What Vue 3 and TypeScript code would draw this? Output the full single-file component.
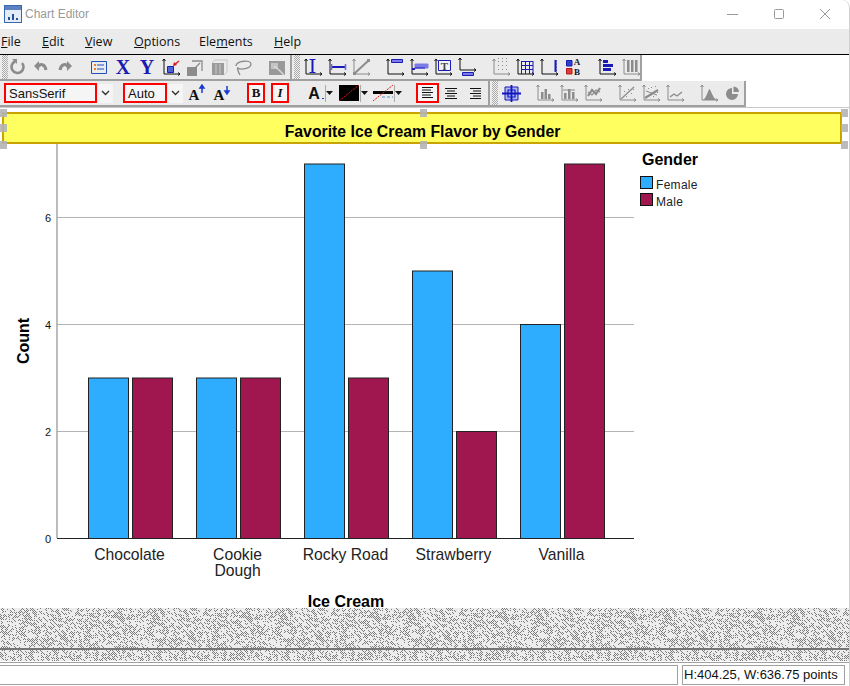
<script setup lang="ts">
interface Shape { d?: string; s?: string; f?: string; w?: number; t?: string; x?: number; y?: number; fs?: number }
type Icon = Shape[] | null

const BK = '#111'
const GR = '#8c8c8c'
const BL = '#1a1ab4'
const ax = 'M5 4V19H21M3.5 6L5 4L6.5 6M19 17.5L21 19L19 20.5'
const line = (d: string, s = BK, w = 1): Shape => ({ d, s, w, f: 'none' })
const fill = (d: string, f: string, s?: string): Shape => ({ d, f, s, w: 1 })
const axes = (c = BK): Shape => line(ax, c)
const txt = (t: string, x: number, y: number, fs: number, f: string): Shape => ({ t, x, y, fs, f })

const dots = 'M9 6h1v1H9zM13 6h1v1h-1zM17 6h1v1h-1zM9 10h1v1H9zM13 10h1v1h-1zM17 10h1v1h-1zM9 14h1v1H9zM13 14h1v1h-1zM17 14h1v1h-1z'

const undo: Shape[] = [line('M9 12C11 8 16 9 17 15', GR, 3), fill('M5 11L10 6V16Z', GR)]
const redo: Shape[] = [line('M15 12C13 8 8 9 7 15', GR, 3), fill('M19 11L14 6V16Z', GR)]

const group1: Icon[] = [
  [line('M17 8A6 6 0 1 1 10 6.5', GR, 2.6), fill('M7 4L12 4V9Z', GR)],
  undo,
  redo,
  null,
  [line('M4.5 6.5H19.5V18.5H4.5Z', '#1f4fc0'), fill('M7 9h2v2H7zM7 13h2v2H7z', '#e8812a'), line('M10 10H17M10 14H17', '#1f4fc0')],
  [txt('X', 12, 19, 20, BL)],
  [txt('Y', 12, 19, 20, BL)],
  [axes(), fill('M8.5 11.5H14.5V17.5H8.5Z', '#4c62d8', BL), line('M20 6L15 10', '#e01818', 1.4), fill('M14 11L15 7L18 10Z', '#e01818')],
  [fill('M4 12H14V21H4Z', GR), line('M9 6H19V16M17 8L10 15', GR, 1.3)],
  [fill('M5 8H17V20H5Z', '#9a9a9a'), line('M5 8L8 5H20V17L17 20M9 9V19M13 9V19', '#c8c8c8', 1)],
  [line('M5 11C5 6 20 4 20 9C20 14 9 15 7 13C6 12 7 17 9 20', GR, 1.3)],
  null,
  [fill('M4 6H20V20H4Z', '#999'), fill('M6 8H13V14H6Z', '#c4c4c4'), line('M9 11L14 15L19 20', '#d8d8d8', 1.5)],
]
const group2: Icon[] = [
  [axes(), fill('M10.5 5H12.5V17H10.5Z', BL), line('M8.5 4.5H14.5M8.5 17.5H14.5', BL)],
  [axes(), fill('M7 11H20V13H7Z', BL), line('M6.5 9V15M20.5 9V15', '#6d6de0', 1.6)],
  [axes(GR), line('M6 18L19 6', GR, 2), fill('M4 17h3v3H4zM18 4h3v3h-3z', GR)],
  null,
  [line('M5 4V19H21M3.5 6L5 4L6.5 6M19 17.5L21 19L19 20.5'), fill('M8.5 4.5H19.5V7.5H8.5Z', '#7c7ce8', BL)],
  [axes(), fill('M8 9H21V13H8Z', '#7c7ce8', '#7c7ce8'), fill('M5 13H8V15H5Z', BL), line('M8 13H18', BL)],
  [axes(), fill('M7.5 5.5H19.5V15.5H7.5Z', '#f2f2fb', BL), txt('T', 13.5, 15, 11, '#444')],
  [line('M5 3V15H21M3.5 5L5 3L6.5 5M19 13.5L21 15L19 16.5'), fill('M7.5 17.5H18.5V20.5H7.5Z', '#7c7ce8', BL)],
  null,
  [axes(GR), fill(dots, GR), fill('M9 3h1v1H9zM13 3h1v1h-1zM17 3h1v1h-1z', GR)],
  [axes(), line('M8 6.5H20M8 10.5H20M8 14.5H20M8.5 6V19M12.5 6V19M16.5 6V19M20 6V19', BL)],
  [axes(), line('M18.5 5V17', BL, 2), line('M20 6H19M20 9H19M20 12H19M20 15H19', BL)],
  [fill('M5.5 5.5H11V11H5.5Z', '#2a44c8', BL), fill('M5.5 13.5H11V19H5.5Z', '#e23a3a', '#b01c1c'), txt('A', 16, 10, 9, '#222'), txt('B', 16, 20, 9, '#111')],
  null,
  [axes(), fill('M8 5H13V8H8ZM8 9H18V12H8ZM8 13H16V16H8Z', BL)],
  [axes(GR), fill('M8 5H10.5V17H8ZM12 5H14.5V17H12ZM16 5H18.5V17H16Z', GR)],
]
const group3: Icon[] = [
  [fill('M6 6H19V19H6Z', '#a8b8f0', BL), line('M12.5 4V21M3 12.5H22', '#1414c0', 1.8), line('M9 9H16V16H9Z', '#1414c0', 1.2)],
  null,
  [axes(GR), fill('M8 11H10.5V18H8ZM11.5 8H14V18H11.5ZM15 13H17.5V18H15Z', GR)],
  [axes(GR), fill('M7 12H9.5V18H7ZM11 8H13.5V18H11ZM15 11H17.5V18H15Z', GR), line('M6 9H18', GR)],
  [axes(GR), line('M7 15L11 9L15 13L19 7', GR, 2.2), line('M7 11L11 14L15 9L19 11', GR, 1.2)],
  null,
  [axes(GR), line('M6 18L19 6', GR, 1.3), fill('M9 10h1v1H9zM13 8h1v1h-1zM16 12h1v1h-1zM11 15h1v1h-1zM18 8h1v1h-1z', GR)],
  [axes(GR), line('M6 17L19 9', GR, 2.2), line('M7 10L18 14', GR, 1), fill('M9 7h1v1H9zM12 6h1v1h-1zM16 5h1v1h-1zM18 11h1v1h-1zM14 15h1v1h-1z', GR)],
  [axes(GR), line('M7 16L11 13L14 15L19 11', GR, 1.4)],
  null,
  [axes(GR), fill('M6 19C9 18 11 9 12.5 8C14 9 16 18 20 19Z', GR)],
  [fill('M11 7A6 6 0 1 0 17 13H11Z', GR), fill('M12.5 5.5A5.5 5.5 0 0 1 18 11H12.5Z', GR)],
]

const arrowDown = 'M1 6H8L4.5 10Z'

const cats = [
  { name: ['Chocolate'], x: 129.5, f: 3, m: 3 },
  { name: ['Cookie', 'Dough'], x: 237.5, f: 3, m: 3 },
  { name: ['Rocky Road'], x: 345.5, f: 7, m: 3 },
  { name: ['Strawberry'], x: 453.5, f: 5, m: 2 },
  { name: ['Vanilla'], x: 561.5, f: 4, m: 7 },
]
const y = (v: number) => 538.5 - v * 53.5
const bars = cats.flatMap((c, i) => [
  { x: 88.5 + i * 108, y: y(c.f), h: c.f * 53.5, fill: '#2eadff' },
  { x: 132.5 + i * 108, y: y(c.m), h: c.m * 53.5, fill: '#a0174f' },
])
const handles = [
  [0, 109], [0, 124], [0, 141], [420, 109], [420, 141], [841, 109], [841, 124], [841, 141],
]

// Seeded dither: short runs along a shallow diagonal, as in the reference's desktop fill.
let seed = 12345
const rnd = () => {
  seed = (seed * 1103515245 + 12345) & 0x7fffffff
  return seed / 0x7fffffff
}
const TW = 128
const TH = 64
const dark: boolean[] = new Array(TW * TH).fill(false)
let ditherPath = ''
for (let py = 0; py < TH; py++) {
  for (let px = 0; px < TW; px++) {
    if ((px + py) % 2 !== 0) continue
    const prev = py > 0 && px > 0 ? dark[(py - 1) * TW + px - 1] : false
    const on = rnd() < (prev ? 0.62 : 0.38)
    dark[py * TW + px] = on
    if (on) ditherPath += `M${px} ${py}h1v1h-1z`
  }
}
</script>

<template>
  <div class="win">
    <header class="title">
      <svg class="app-ico" width="18" height="18" viewBox="0 0 18 18">
        <rect x="0.5" y="0.5" width="17" height="17" fill="#e4ecf8" stroke="#3868b0" />
        <rect x="1" y="1" width="16" height="4" fill="#5c80c0" />
        <path d="M4 15V12H6V15ZM8 15V9H10V15ZM12 15V13H14V15Z" fill="#27509a" />
      </svg>
      <span class="title-text">Chart Editor</span>
      <div class="win-btns">
        <svg width="12" height="12" viewBox="0 0 12 12"><path d="M0 6.5H11" stroke="#999" /></svg>
        <svg width="12" height="12" viewBox="0 0 12 12"><rect x="1.5" y="1.5" width="9" height="9" rx="1" fill="none" stroke="#999" /></svg>
        <svg width="12" height="12" viewBox="0 0 12 12"><path d="M1 1L11 11M11 1L1 11" stroke="#999" /></svg>
      </div>
    </header>

    <nav class="menu">
      <span class="m1"><u>F</u>ile</span>
      <span class="m2"><u>E</u>dit</span>
      <span class="m3"><u>V</u>iew</span>
      <span class="m4"><u>O</u>ptions</span>
      <span class="m5">Ele<u>m</u>ents</span>
      <span class="m6"><u>H</u>elp</span>
    </nav>

    <div class="bar bar1">
      <div class="grip first"></div>
      <template v-for="(ic, i) in group1" :key="i">
        <div v-if="!ic" class="gap"></div>
        <svg v-else class="cell" viewBox="0 0 24 24">
          <template v-for="(s, j) in ic" :key="j">
            <text v-if="s.t" :x="s.x" :y="s.y" :font-size="s.fs" :fill="s.f" class="ico-text">{{ s.t }}</text>
            <path v-else :d="s.d" :fill="s.f" :stroke="s.s" :stroke-width="s.w" />
          </template>
        </svg>
      </template>
      <div class="sep"></div>
      <div class="grip"></div>
      <template v-for="(ic, i) in group2" :key="'b' + i">
        <div v-if="!ic" class="gap"></div>
        <svg v-else class="cell" viewBox="0 0 24 24">
          <template v-for="(s, j) in ic" :key="j">
            <text v-if="s.t" :x="s.x" :y="s.y" :font-size="s.fs" :fill="s.f" class="ico-text">{{ s.t }}</text>
            <path v-else :d="s.d" :fill="s.f" :stroke="s.s" :stroke-width="s.w" />
          </template>
        </svg>
      </template>
    </div>

    <div class="bar bar2">
      <div class="red font-box">SansSerif</div>
      <div class="dd"><svg width="9" height="6" viewBox="0 0 9 6"><path d="M1 1L4.5 4.5L8 1" fill="none" stroke="#333" stroke-width="1.4" /></svg></div>
      <div class="red size-box">Auto</div>
      <div class="dd"><svg width="9" height="6" viewBox="0 0 9 6"><path d="M1 1L4.5 4.5L8 1" fill="none" stroke="#333" stroke-width="1.4" /></svg></div>
      <svg class="cell aup" viewBox="0 0 24 24">
        <text x="9" y="19" font-size="15" fill="#111" class="ico-text">A</text>
        <path d="M17 12V7M15 7L17 4L19 7Z" stroke="#1a3ad0" stroke-width="1.5" fill="#1a3ad0" />
      </svg>
      <svg class="cell adn" viewBox="0 0 24 24">
        <text x="9" y="19" font-size="15" fill="#111" class="ico-text">A</text>
        <path d="M17 5V10M15 10L17 13L19 10Z" stroke="#1a3ad0" stroke-width="1.5" fill="#1a3ad0" />
      </svg>
      <div class="red fmt b">B</div>
      <div class="red fmt i">I</div>
      <svg class="cell acolor" viewBox="0 0 24 24">
        <text x="11" y="18" font-size="16" fill="#111" class="ico-sans">A</text>
        <path d="M19 17h2v1h-2z" fill="#1a3ad0" />
      </svg>
      <svg class="arrow a1" width="9" height="17" viewBox="0 0 9 17">
        <path d="M0.5 0V17" stroke="#aaa" /><path :d="arrowDown" fill="#111" />
      </svg>
      <svg class="swatch s1" width="20" height="16" viewBox="0 0 20 16">
        <rect width="20" height="16" fill="#000" />
        <path d="M0 16L20 0" stroke="#e01818" stroke-dasharray="2 1" />
      </svg>
      <svg class="arrow a2" width="9" height="17" viewBox="0 0 9 17">
        <path d="M0.5 0V17" stroke="#aaa" /><path :d="arrowDown" fill="#111" />
      </svg>
      <svg class="swatch s2" width="20" height="16" viewBox="0 0 20 16">
        <rect x="0" y="6" width="20" height="3" fill="#000" />
        <path d="M0 16L20 0" stroke="#e01818" stroke-dasharray="2 1" />
        <path d="M9 12H20" stroke="#5a8ac0" stroke-dasharray="3 2" />
      </svg>
      <svg class="arrow a3" width="9" height="17" viewBox="0 0 9 17">
        <path d="M0.5 0V17" stroke="#aaa" /><path :d="arrowDown" fill="#111" />
      </svg>
      <div class="red align-box">
        <svg width="14" height="14" viewBox="0 0 14 14"><path d="M1 1.5H12M1 4H10M1 6.5H12M1 9H10M1 11.5H12" stroke="#111" /></svg>
      </div>
      <svg class="cell plain" viewBox="0 0 24 24"><path d="M6 7.5H18M8 10H16M6 12.5H18M8 15H16M6 17.5H18" stroke="#111" /></svg>
      <svg class="cell plain" viewBox="0 0 24 24"><path d="M7 7.5H18M10 10H18M7 12.5H18M10 15H18M7 17.5H18" stroke="#111" /></svg>
      <div class="sep"></div>
      <div class="grip"></div>
      <template v-for="(ic, i) in group3" :key="'c' + i">
        <div v-if="!ic" class="gap"></div>
        <svg v-else class="cell" viewBox="0 0 24 24">
          <template v-for="(s, j) in ic" :key="j">
            <text v-if="s.t" :x="s.x" :y="s.y" :font-size="s.fs" :fill="s.f" class="ico-text">{{ s.t }}</text>
            <path v-else :d="s.d" :fill="s.f" :stroke="s.s" :stroke-width="s.w" />
          </template>
        </svg>
      </template>
    </div>

    <svg class="chart" viewBox="0 107 849 501" width="849" height="501">
      <path d="M0 107.5H849" stroke="#c8c8c8" />
      <path d="M57 217.5H634M57 324.5H634M57 431.5H634" stroke="#b4b4b4" />
      <path d="M57 143V538" stroke="#a0a0a0" stroke-width="1.4" />
      <rect v-for="(b, i) in bars" :key="i" :x="b.x" :y="b.y" width="40" :height="b.h" :fill="b.fill" stroke="#222" />
      <path d="M57 538.5H634" stroke="#222" />

      <text x="51" y="543" text-anchor="end" class="tick">0</text>
      <text x="51" y="436" text-anchor="end" class="tick">2</text>
      <text x="51" y="329" text-anchor="end" class="tick">4</text>
      <text x="51" y="222" text-anchor="end" class="tick">6</text>

      <template v-for="c in cats" :key="c.x">
        <text v-for="(n, k) in c.name" :key="n" :x="c.x" :y="560 + k * 15.5" text-anchor="middle" class="cat">{{ n }}</text>
      </template>

      <text x="346" y="607" text-anchor="middle" class="axis-title">Ice Cream</text>
      <text transform="translate(29 341) rotate(-90)" text-anchor="middle" class="axis-title">Count</text>

      <text x="642" y="165" class="axis-title">Gender</text>
      <rect x="640.5" y="176.5" width="12" height="12" fill="#2eadff" stroke="#111" />
      <rect x="640.5" y="193.5" width="12" height="12" fill="#a0174f" stroke="#111" />
      <text x="656" y="189" class="legend">Female</text>
      <text x="656" y="206" class="legend">Male</text>

      <rect x="3" y="113" width="838" height="30" fill="#ffff60" stroke="#c9a400" stroke-width="2" />
      <text x="422.5" y="136.5" text-anchor="middle" class="chart-title">Favorite Ice Cream Flavor by Gender</text>
      <rect v-for="(h, i) in handles" :key="i" :x="h[0]" :y="h[1]" width="7" height="8" fill="#b4b4b4" opacity="0.9" />
    </svg>

    <div class="dither">
      <svg class="dither-svg" width="849" height="53">
        <defs>
          <pattern id="dth" :width="TW" :height="TH" patternUnits="userSpaceOnUse">
            <rect :width="TW" :height="TH" fill="#ededed" />
            <path :d="ditherPath" fill="#7c7c7c" />
          </pattern>
        </defs>
        <rect width="849" height="53" fill="url(#dth)" />
        <rect y="40" width="849" height="2" fill="#767676" />
      </svg>
    </div>

    <footer class="status">
      <div class="st-left"></div>
      <div class="st-right">H:404.25, W:636.75 points</div>
    </footer>
  </div>
</template>

<style scoped>
.win {
  width: 850px;
  height: 686px;
  box-sizing: border-box;
  display: flex;
  flex-direction: column;
  background: #fff;
  border-right: 1px solid #d0d0d0;
  border-top-right-radius: 8px;
  font-family: "Liberation Sans", Arial, sans-serif;
  overflow: hidden;
}
.win > * { flex: none; }
.title {
  height: 29px;
  display: flex;
  align-items: center;
  padding: 0 0 1px 4px;
  box-sizing: border-box;
}
.app-ico { flex: none; }
.title-text {
  margin-left: 3px;
  font-family: "Liberation Sans", sans-serif;
  font-size: 12px;
  color: #9a9a9a;
}
.win-btns {
  margin-left: auto;
  display: flex;
  gap: 34px;
  padding-right: 18px;
}
.menu {
  height: 26px;
  box-sizing: border-box;
  background: #ebebeb;
  border-bottom: 1px solid #000;
  display: flex;
  align-items: center;
  padding: 0 0 0 1px;
  font-size: 12.5px;
  font-family: "Open Sans", sans-serif;
  color: #111;
}
.m1 { width: 41px; }
.m2 { width: 43px; }
.m3 { width: 49px; }
.m4 { width: 65px; }
.m5 { width: 75px; }
.bar {
  display: flex;
  height: 26px;
  box-sizing: border-box;
  background: #ebebeb;
  border-bottom: 2px solid #a0a0a0;
  border-right: 2px solid #a0a0a0;
  align-items: stretch;
}
.bar1 { width: 642px; padding-left: 2px; }
.bar2 { width: 746px; padding-left: 4px; align-items: center; }
.grip {
  width: 6px;
  flex: none;
  align-self: stretch;
  margin: 0 1px 0 2px;
  background: repeating-conic-gradient(#a8a8a8 0 25%, #f2f2f2 0 50%) 0 0 / 2px 2px;
}
.grip.first { margin: 0 -3px 0 0; }
.sep {
  width: 2px;
  flex: none;
  align-self: stretch;
  background: #a0a0a0;
  margin-left: 1px;
}
.cell { width: 24px; height: 24px; flex: none; }
.gap { width: 10px; flex: none; }
.ico-text {
  font-family: "Liberation Serif", serif;
  font-weight: 700;
  text-anchor: middle;
}
.ico-sans {
  font-family: "Liberation Sans", sans-serif;
  font-weight: 700;
  text-anchor: middle;
}
.red {
  box-sizing: border-box;
  border: 2px solid #f00;
  height: 20px;
  flex: none;
  display: flex;
  align-items: center;
  font-size: 13px;
  color: #111;
  background: #f5f5f5;
}
.font-box { width: 93px; padding-left: 3px; }
.size-box { width: 44px; padding-left: 3px; margin-left: 10px; }
.dd {
  width: 15px;
  height: 19px;
  margin-left: 1px;
  background: #f5f5f5;
  display: flex;
  align-items: center;
  justify-content: center;
  flex: none;
}
.aup { margin-left: 2px; }
.adn { margin-left: 1px; }
.fmt {
  width: 18px;
  justify-content: center;
  font-family: "Liberation Serif", serif;
  font-weight: 700;
  font-size: 13px;
}
.b { margin-left: 13px; }
.i { margin-left: 6px; font-style: italic; }
.acolor { margin-left: 14px; }
.arrow { flex: none; }
.a1 { margin-left: -2px; }
.swatch { flex: none; }
.s1 { margin-left: 5px; }
.a2 { margin-left: 1px; }
.s2 { margin-left: 4px; }
.a3 { margin-left: 1px; }
.align-box {
  width: 23px;
  margin-left: 13px;
  justify-content: center;
}
.chart { display: block; }
.tick {
  font-family: "Liberation Sans", sans-serif;
  font-size: 11px;
  fill: #111;
}
.cat {
  font-family: "Liberation Sans", sans-serif;
  font-size: 15.7px;
  fill: #222;
}
.legend {
  font-family: "Liberation Sans", sans-serif;
  font-size: 12px;
  letter-spacing: 0.3px;
  fill: #222;
}
.axis-title {
  font-family: "Liberation Sans", sans-serif;
  font-weight: 700;
  font-size: 16px;
  fill: #000;
}
.chart-title {
  font-family: "Liberation Sans", sans-serif;
  font-weight: 700;
  font-size: 15.8px;
  fill: #000;
}
.dither { height: 53px; }
.dither-svg { display: block; }
.status {
  margin-top: 1px;
  border-top: 1px solid #a0a0a0;
  display: flex;
  padding-top: 2px;
}
.st-left {
  width: 678px;
  height: 20px;
  box-sizing: border-box;
  border: 1px solid #a0a0a0;
  border-left: none;
  flex: none;
}
.st-right {
  margin-left: 4px;
  width: 163px;
  height: 20px;
  box-sizing: border-box;
  border: 1px solid #a0a0a0;
  padding-left: 1px;
  font-size: 13px;
  line-height: 18px;
  color: #111;
  white-space: nowrap;
  flex: none;
}
</style>

<style>
html, body { margin: 0; background: #fff; overflow: hidden; }
</style>
